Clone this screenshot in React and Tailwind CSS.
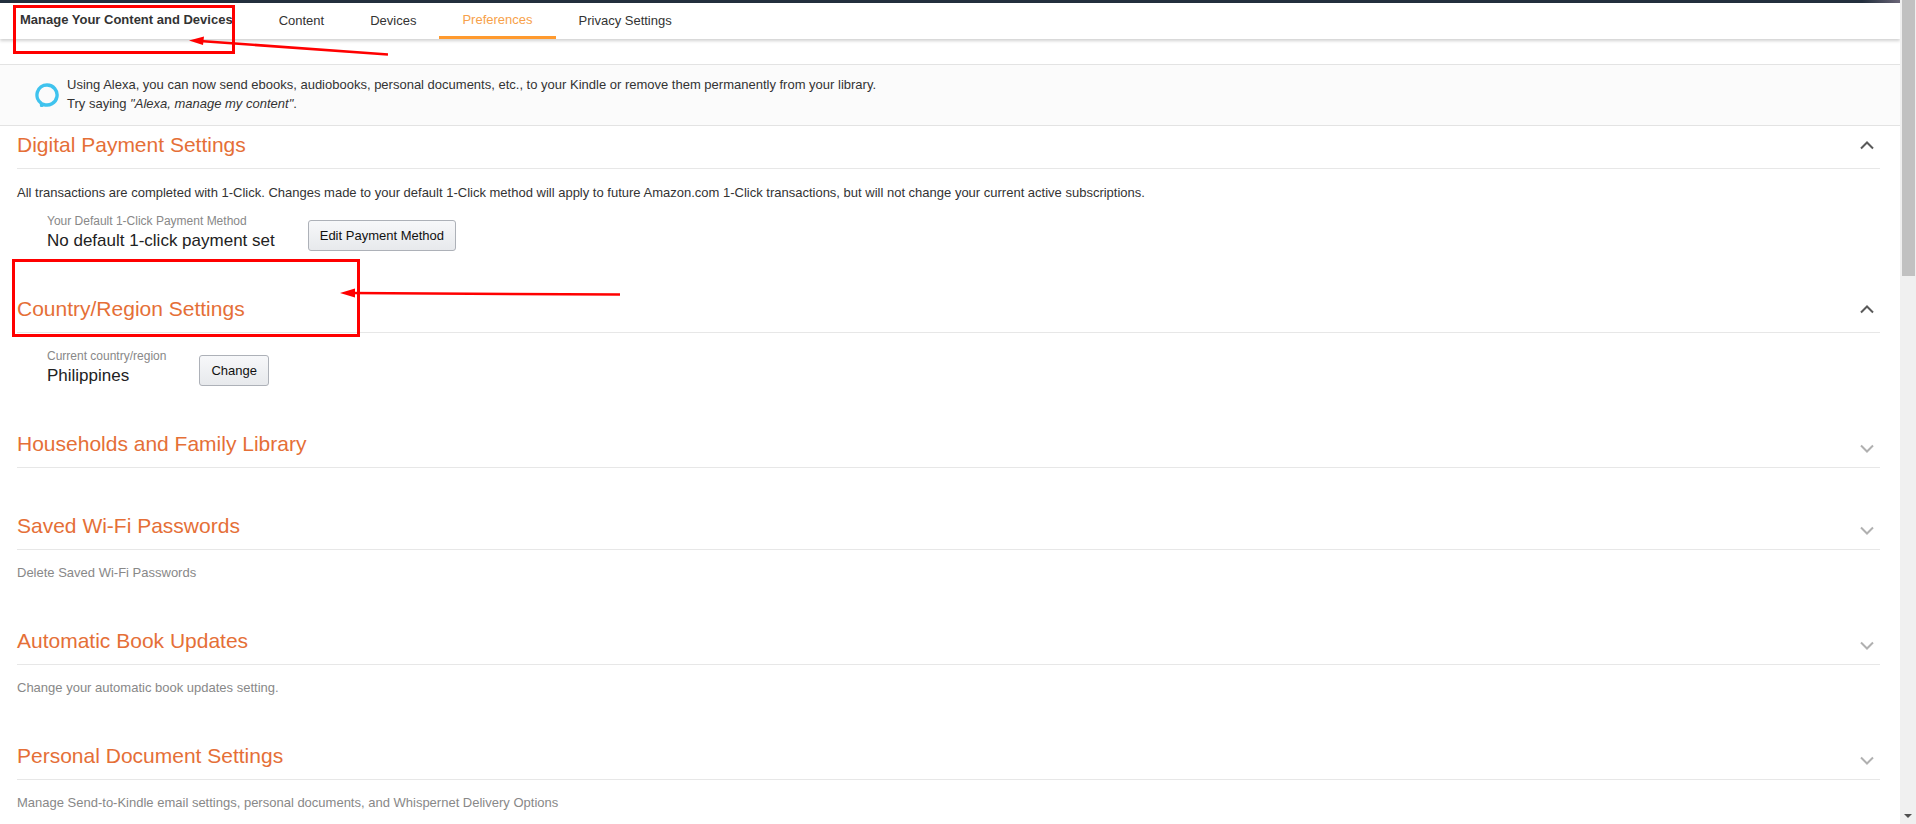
import React from 'react'

function Chevron({ open }) {
  return (
    <svg width="14" height="9" viewBox="0 0 14 9" fill="none" className={open ? 'mr-[6px] mt-[15px]' : 'mr-[6px] mt-[19px]'}>
      <polyline
        points={open ? '1,7.5 7,1.5 13,7.5' : '1,1.5 7,7.5 13,1.5'}
        stroke={open ? '#5a5a5a' : '#b0b0b0'}
        strokeWidth="2"
      />
    </svg>
  )
}

function SectionHead({ title, open }) {
  return (
    <div className="flex h-[43px] items-start justify-between border-b border-[#e7e7e7]">
      <h2 className="text-[21px] leading-[38px] text-[#e56f37]">{title}</h2>
      <Chevron open={open} />
    </div>
  )
}

function ValueRow({ label, value, action }) {
  return (
    <div className="ml-[30px] flex items-start gap-[33px]">
      <div>
        <div className="text-[12px] leading-[18px] text-[#888]">{label}</div>
        <div className="pt-[1px] text-[17px] leading-[20px] text-[#222]">{value}</div>
      </div>
      <button className="mt-[8px] h-[31px] rounded-[3px] border border-[#adb1b8] bg-gradient-to-b from-[#f7f8fa] to-[#e7e9ec] px-[11px] text-[13px] text-[#111]">
        {action}
      </button>
    </div>
  )
}

function CollapsedSection({ title, sub }) {
  return (
    <section className="pb-[40px]">
      <SectionHead title={title} />
      <p className="mt-[14px] text-[13px] leading-[18px] text-[#888]">{sub}</p>
    </section>
  )
}

export default function App() {
  return (
    <div className="relative flex h-[824px] overflow-hidden bg-white font-['Liberation_Sans',Arial,sans-serif]">
      <div className="min-w-0 flex-1">
        <div className="h-[3px] bg-gradient-to-r from-[#232f3e] from-[98%] to-[#6b6678]" />
        <nav className="flex h-[36px] items-start bg-white shadow-[0_2px_3px_rgba(0,0,0,0.18)]">
          <div className="pl-[20px] pt-[8px] text-[13px] font-bold leading-[18px] text-[#333]">
            Manage Your Content and Devices
          </div>
          <div className="ml-[23px] flex h-full text-[13px] text-[#333]">
            <a className="flex items-center px-[23px]">Content</a>
            <a className="flex items-center px-[23px]">Devices</a>
            <a className="flex items-center border-b-[3px] border-[#ff9a2e] px-[23px] text-[#f7a14a]">Preferences</a>
            <a className="flex items-center px-[23px]">Privacy Settings</a>
          </div>
        </nav>

        <div className="mt-[25px] flex h-[62px] items-center border-y border-[#e3e3e3] bg-[#fbfbfb] pl-[35px]">
          <svg width="24" height="24" viewBox="0 0 24 24" fill="none">
            <path
              d="M12 2a10 10 0 1 1-3.6 19.3L6.6 22.6 6.4 20.3A10 10 0 0 1 12 2Z"
              stroke="#3fc3ee"
              strokeWidth="3.4"
              strokeLinejoin="round"
            />
          </svg>
          <div className="ml-[8px] mb-[2px] text-[13px] leading-[19px] text-[#333]">
            <div>Using Alexa, you can now send ebooks, audiobooks, personal documents, etc., to your Kindle or remove them permanently from your library.</div>
            <div>Try saying <i>"Alexa, manage my content"</i>.</div>
          </div>
        </div>

        <div className="pl-[17px] pr-[20px]">
          <section className="pb-[39px]">
            <SectionHead title="Digital Payment Settings" open />
            <p className="mt-[15px] text-[13px] leading-[18px] text-[#333]">
              All transactions are completed with 1-Click. Changes made to your default 1-Click method will apply to future Amazon.com 1-Click transactions, but will not change your current active subscriptions.
            </p>
            <div className="mt-[10px]">
              <ValueRow label="Your Default 1-Click Payment Method" value="No default 1-click payment set" action="Edit Payment Method" />
            </div>
          </section>

          <section className="pb-[39px]">
            <SectionHead title="Country/Region Settings" open />
            <div className="mt-[14px]">
              <ValueRow label="Current country/region" value="Philippines" action="Change" />
            </div>
          </section>

          <section className="pb-[39px]">
            <SectionHead title="Households and Family Library" />
          </section>

          <CollapsedSection title="Saved Wi-Fi Passwords" sub="Delete Saved Wi-Fi Passwords" />
          <CollapsedSection title="Automatic Book Updates" sub="Change your automatic book updates setting." />
          <CollapsedSection title="Personal Document Settings" sub="Manage Send-to-Kindle email settings, personal documents, and Whispernet Delivery Options" />
        </div>
      </div>

      {/* scrollbar */}
      <div className="flex w-[16px] shrink-0 flex-col items-center bg-[#f0f0f0]">
        <div className="ml-[1px] h-[276px] w-[13px] bg-[#c1c1c1]" />
        <div className="mt-auto mb-[6px] h-0 w-0 border-x-[4px] border-t-[4px] border-x-transparent border-t-[#505050]" />
      </div>

      {/* red annotations drawn on top of the screenshot */}
      <div className="absolute left-[13px] top-[5px] h-[49px] w-[222px] border-[3px] border-[#f00]" />
      <div className="absolute left-[12px] top-[259px] h-[78px] w-[348px] border-[3px] border-[#f00]" />
      <svg className="pointer-events-none absolute left-0 top-0" width="700" height="320">
        <line x1="388" y1="54.5" x2="200" y2="41" stroke="#f00" strokeWidth="2.5" />
        <polygon points="189,40.5 204,36.5 203,45" fill="#f00" />
        <line x1="620" y1="294.5" x2="350" y2="293" stroke="#f00" strokeWidth="2.5" />
        <polygon points="340,293 355,288.5 355,297.5" fill="#f00" />
      </svg>
    </div>
  )
}
